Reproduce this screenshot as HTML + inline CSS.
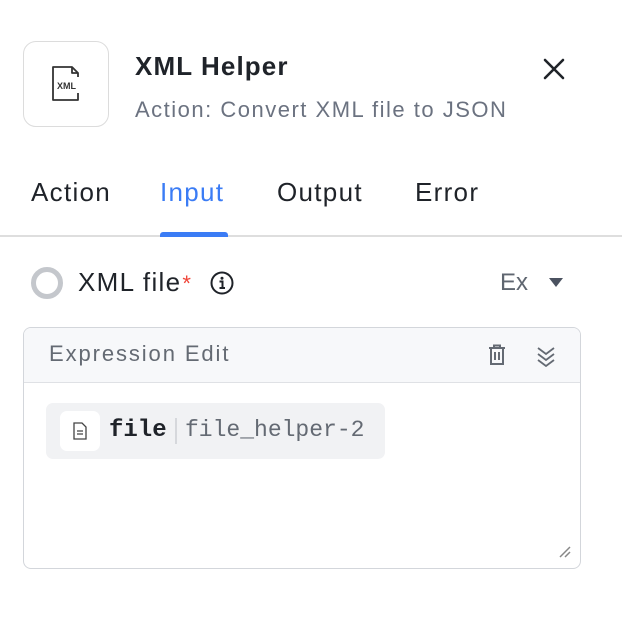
<!DOCTYPE html>
<html><head><style>
body{margin:0;width:622px;height:634px;background:#fff;font-family:"Liberation Sans",sans-serif;position:relative;overflow:hidden}
.a{position:absolute;white-space:nowrap}
.t{font-size:26px;letter-spacing:1.3px;color:#1f2329}
</style></head><body>
<div class="a" style="left:23px;top:41px;width:84px;height:84px;border:1.5px solid #dcdcdc;border-radius:13px"></div>
<svg class="a" style="left:48px;top:64px" width="36" height="40" viewBox="0 0 36 40">
<path d="M30 13V9L24 3H5V36H30V29" fill="none" stroke="#333" stroke-width="1.8" stroke-linejoin="round"/>
<path d="M24 3V9H30" fill="none" stroke="#333" stroke-width="1.8" stroke-linejoin="round"/>
<text x="9" y="25" font-size="9" font-weight="bold" fill="#333" font-family="Liberation Sans">XML</text>
</svg>
<div class="a" style="left:135px;top:51px;font-size:26px;font-weight:bold;letter-spacing:1.1px;color:#1f2329">XML Helper</div>
<div class="a" style="left:135px;top:97px;font-size:22px;letter-spacing:1.5px;color:#6b7280">Action: Convert XML file to JSON</div>
<svg class="a" style="left:542px;top:57px" width="24" height="24" viewBox="0 0 24 24"><path d="M3 3L21 21M21 3L3 21" stroke="#1f2329" stroke-width="2.6" stroke-linecap="round"/></svg>
<div class="a t" style="left:31px;top:177px">Action</div>
<div class="a t" style="left:160px;top:177px;color:#3b7cf5">Input</div>
<div class="a t" style="left:277px;top:177px">Output</div>
<div class="a t" style="left:415px;top:177px">Error</div>
<div class="a" style="left:0;top:235px;width:622px;height:2px;background:#dedede"></div>
<div class="a" style="left:160px;top:232px;width:68px;height:5px;background:#3b7cf5;border-radius:3px 3px 0 0"></div>
<div class="a" style="left:31px;top:267px;width:22px;height:22px;border:5px solid #c4c7cc;border-radius:50%"></div>
<div class="a t" style="left:78px;top:267px">XML file<span style="color:#f04438;font-size:22px;margin-left:1px">*</span></div>
<svg class="a" style="left:209px;top:270px" width="26" height="26" viewBox="0 0 26 26"><circle cx="13" cy="13" r="10.5" fill="none" stroke="#1f2329" stroke-width="2"/><circle cx="13" cy="8.3" r="1.5" fill="#1f2329"/><path d="M10.5 11.5H13.5V18M10.5 18H16" stroke="#1f2329" stroke-width="2" fill="none"/></svg>
<div class="a" style="left:500px;top:269px;font-size:24px;color:#5f6670">Ex</div>
<svg class="a" style="left:548px;top:277px" width="16" height="12"><path d="M1 1H15L8 10Z" fill="#4b5260"/></svg>
<div class="a" style="left:23px;top:327px;width:556px;height:240px;border:1.5px solid #d3d6db;border-radius:8px;overflow:hidden">
<div style="height:54px;background:#f7f8fa;border-bottom:1.5px solid #dfe1e5"></div>
</div>
<div class="a" style="left:49px;top:341px;font-size:22px;letter-spacing:1.9px;color:#646a73">Expression Edit</div>
<svg class="a" style="left:487px;top:344px" width="20" height="22" viewBox="0 0 20 22"><path d="M2 4H18M7 4V1.5H13V4M4 4V20H16V4M8 8V16M12 8V16" fill="none" stroke="#646a73" stroke-width="2"/></svg>
<svg class="a" style="left:535px;top:345px" width="22" height="22" viewBox="0 0 22 22"><path d="M3 3L11 9L19 3M3 9L11 15L19 9M3 15L11 21L19 15" fill="none" stroke="#646a73" stroke-width="1.8"/></svg>
<div class="a" style="left:46px;top:403px;width:339px;height:56px;background:#f1f2f4;border-radius:7px"></div>
<div class="a" style="left:60px;top:411px;width:40px;height:40px;background:#fff;border-radius:7px"></div>
<svg class="a" style="left:72px;top:422px" width="16" height="18" viewBox="0 0 16 18"><path d="M2 1H10L14 5V17H2Z M5 9H11M5 12H11" fill="none" stroke="#444" stroke-width="1.3"/></svg>
<div class="a" style="left:109px;top:417px;font-family:'Liberation Mono',monospace;font-size:24px;font-weight:bold;color:#1f2329">file</div>
<div class="a" style="left:175px;top:418px;width:2px;height:26px;background:#d6d8dc"></div>
<div class="a" style="left:185px;top:417px;font-family:'Liberation Mono',monospace;font-size:23px;color:#646a73">file_helper-2</div>
<svg class="a" style="left:558px;top:545px" width="14" height="14"><path d="M2 12L12 2M7 12L12 7" stroke="#888" stroke-width="1.5"/></svg>
</body></html>
